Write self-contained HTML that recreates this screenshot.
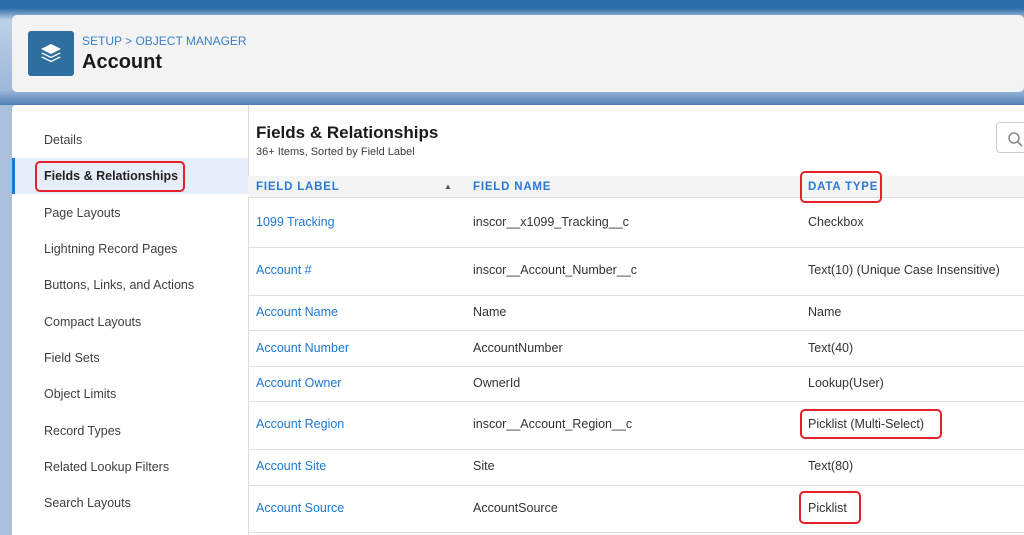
<!DOCTYPE html>
<html><head><style>
*{margin:0;padding:0;box-sizing:border-box}
body{width:1024px;height:535px;overflow:hidden;position:relative;font-family:"Liberation Sans",sans-serif;background:#a9c0dc}
.a{position:absolute;white-space:nowrap}
.top{left:0;top:0;width:1024px;height:105px;background:linear-gradient(#2c6ca8 0,#2c6ca8 8px,#bdd0e6 20px,#9db8d9 90px,#4f7fb5 105px)}
.hdr{left:12px;top:15px;width:1012px;height:77px;background:#f3f3f3;border-radius:5px}
.side{left:12px;top:105px;width:236px;height:430px;background:#fff;border-radius:4px 0 0 0}
.main{left:248px;top:105px;width:776px;height:430px;background:#fff;border-left:1px solid #ddd}
.nav{left:44px;font-size:12.5px;color:#3e3e3c}
.lnk{left:256px;font-size:12.5px;color:#1b78d0}
.fn{left:473px;font-size:12.5px;color:#333}
.dt{left:808px;font-size:12.5px;color:#333}
.ln{left:248px;width:776px;height:1px;background:#e0e0e0}
.th{font-size:11.5px;font-weight:bold;color:#2a7ad1;letter-spacing:.8px}
.red{border:2px solid #e4212b;border-radius:5px}
</style></head><body>
<div class="a top"></div>
<div class="a hdr"></div>
<div class="a" style="left:28px;top:31px;width:46px;height:45px;background:#2f6f9f;border-radius:3px">
<svg width="46" height="45" viewBox="0 0 46 45"><g fill="#fff"><path d="M23 13l10 5-10 5-10-5z"/><path d="M14.5 21.5l8.5 4.3 8.5-4.3 1.5.8-10 5-10-5z"/><path d="M14.5 25.5l8.5 4.3 8.5-4.3 1.5.8-10 5-10-5z"/></g></svg></div>
<div class="a" style="left:82px;top:34px;font-size:12px;color:#3a7fc9">SETUP &gt; OBJECT MANAGER</div>
<div class="a" style="left:82px;top:51px;font-size:20px;font-weight:bold;color:#1a1a1a">Account</div>
<div class="a side"></div>
<div class="a main"></div>
<div class="a" style="left:12px;top:158px;width:236px;height:36px;background:#e6eefa;border-left:3px solid #1b78d0"></div>
<div class="a red" style="left:35px;top:161px;width:150px;height:31px"></div>
<div class="a nav" style="top:133px">Details</div>
<div class="a nav" style="top:169px;font-weight:bold;color:#222">Fields &amp; Relationships</div>
<div class="a nav" style="top:206px">Page Layouts</div>
<div class="a nav" style="top:242px">Lightning Record Pages</div>
<div class="a nav" style="top:278px">Buttons, Links, and Actions</div>
<div class="a nav" style="top:315px">Compact Layouts</div>
<div class="a nav" style="top:351px">Field Sets</div>
<div class="a nav" style="top:387px">Object Limits</div>
<div class="a nav" style="top:424px">Record Types</div>
<div class="a nav" style="top:460px">Related Lookup Filters</div>
<div class="a nav" style="top:496px">Search Layouts</div>
<div class="a" style="left:256px;top:123px;font-size:17px;font-weight:bold;color:#1a1a1a">Fields &amp; Relationships</div>
<div class="a" style="left:256px;top:146px;font-size:11px;color:#3e3e3c">36+ Items, Sorted by Field Label</div>
<div class="a" style="left:996px;top:122px;width:40px;height:31px;border:1px solid #ccc;border-radius:4px;background:#fff"><svg width="20" height="20" style="position:absolute;left:9px;top:7px"><circle cx="8" cy="8" r="5" fill="none" stroke="#888" stroke-width="1.5"/><path d="M12 12l4 4" stroke="#888" stroke-width="1.6"/></svg></div>
<div class="a" style="left:248px;top:176px;width:776px;height:22px;background:#f4f4f4;border-bottom:1px solid #ddd"></div>
<div class="a th" style="left:256px;top:181px">FIELD LABEL</div>
<div class="a" style="left:444px;top:182px;font-size:8px;color:#555">▲</div>
<div class="a th" style="left:473px;top:181px">FIELD NAME</div>
<div class="a th" style="left:808px;top:181px">DATA TYPE</div>
<div class="a red" style="left:800px;top:171px;width:82px;height:32px"></div>
<div class="a ln" style="top:247px"></div><div class="a ln" style="top:295px"></div><div class="a ln" style="top:330px"></div><div class="a ln" style="top:366px"></div><div class="a ln" style="top:401px"></div><div class="a ln" style="top:449px"></div><div class="a ln" style="top:485px"></div><div class="a ln" style="top:532px"></div>
<div class="a lnk" style="top:215px">1099 Tracking</div><div class="a fn" style="top:215px">inscor__x1099_Tracking__c</div><div class="a dt" style="top:215px">Checkbox</div>
<div class="a lnk" style="top:263px">Account #</div><div class="a fn" style="top:263px">inscor__Account_Number__c</div><div class="a dt" style="top:263px">Text(10) (Unique Case Insensitive)</div>
<div class="a lnk" style="top:305px">Account Name</div><div class="a fn" style="top:305px">Name</div><div class="a dt" style="top:305px">Name</div>
<div class="a lnk" style="top:341px">Account Number</div><div class="a fn" style="top:341px">AccountNumber</div><div class="a dt" style="top:341px">Text(40)</div>
<div class="a lnk" style="top:376px">Account Owner</div><div class="a fn" style="top:376px">OwnerId</div><div class="a dt" style="top:376px">Lookup(User)</div>
<div class="a lnk" style="top:417px">Account Region</div><div class="a fn" style="top:417px">inscor__Account_Region__c</div><div class="a dt" style="top:417px">Picklist (Multi-Select)</div>
<div class="a red" style="left:800px;top:409px;width:142px;height:30px"></div>
<div class="a lnk" style="top:459px">Account Site</div><div class="a fn" style="top:459px">Site</div><div class="a dt" style="top:459px">Text(80)</div>
<div class="a lnk" style="top:501px">Account Source</div><div class="a fn" style="top:501px">AccountSource</div><div class="a dt" style="top:501px">Picklist</div>
<div class="a red" style="left:799px;top:491px;width:62px;height:33px"></div>
</body></html>
